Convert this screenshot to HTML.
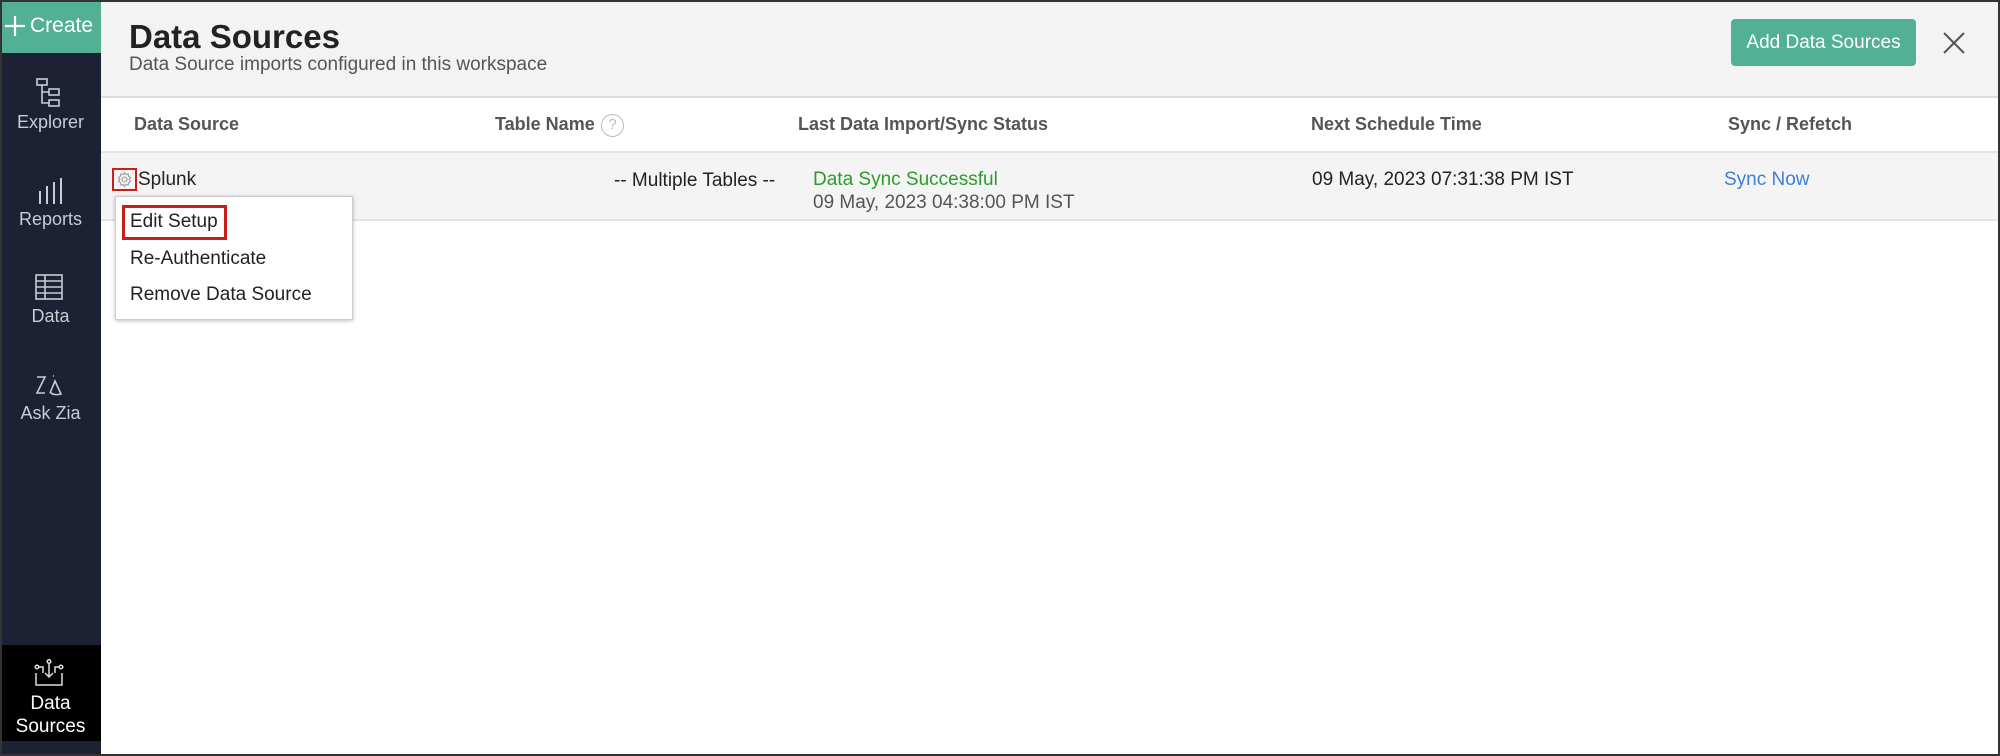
<!DOCTYPE html>
<html><head><meta charset="utf-8"><style>
*{margin:0;padding:0;box-sizing:border-box}
body{width:2000px;height:756px;position:relative;overflow:hidden;font-family:"Liberation Sans",sans-serif;background:#fff;color:#222}
.a{position:absolute;white-space:nowrap}
#frame{position:absolute;left:0;top:0;width:2000px;height:756px;border:2px solid #333;pointer-events:none;z-index:10}
.side{left:0;top:0;width:101px;height:756px;background:#1c2133}
.sl{color:#c9ccd4;font-size:18px;width:101px;text-align:center}
.th{font-size:18px;font-weight:bold;color:#555;top:114px}
.td{font-size:19px;color:#222}
</style></head><body>
<div class="a side"></div>
<div class="a" style="left:0;top:0;width:101px;height:53px;background:#52b095"></div>
<svg class="a" style="left:5px;top:16px" width="20" height="20" viewBox="0 0 20 20" stroke="#fff" stroke-width="2.2"><path d="M10 0v20M0 10h20"/></svg>
<div class="a" style="left:30px;top:14px;color:#fff;font-size:21px;">Create</div>
<svg class="a" style="left:35px;top:77px" width="28" height="32" viewBox="0 0 28 32" fill="none" stroke="#c9ccd4" stroke-width="1.6"><rect x="2" y="2" width="10" height="6"/><rect x="14" y="12" width="10" height="6"/><rect x="14" y="23" width="10" height="6"/><path d="M7 8v18h7M7 15h7"/></svg>
<div class="a sl" style="top:112px">Explorer</div>
<svg class="a" style="left:37px;top:177px" width="26" height="28" viewBox="0 0 26 28" stroke="#c9ccd4" stroke-width="2"><path d="M3 27V14M10 27V9M17 27V5M24 27V1"/></svg>
<div class="a sl" style="top:209px">Reports</div>
<svg class="a" style="left:35px;top:274px" width="28" height="26" viewBox="0 0 28 26" fill="none" stroke="#c9ccd4" stroke-width="1.6"><rect x="1" y="1" width="26" height="24"/><path d="M1 7h26M1 13h26M1 19h26M10 1v24"/></svg>
<div class="a sl" style="top:306px">Data</div>
<svg class="a" style="left:35px;top:374px" width="28" height="22" viewBox="0 0 28 22" fill="none" stroke="#c9ccd4" stroke-width="1.6"><path d="M2 3h8L2 19h8M15 19l5-12 6 13c-3 1-9 1-11-2M18 2h1"/></svg>
<div class="a sl" style="top:403px">Ask Zia</div>
<div class="a" style="left:0;top:645px;width:101px;height:96px;background:#000"></div>
<svg class="a" style="left:34px;top:659px" width="30" height="27" viewBox="0 0 30 27" fill="none" stroke="#ddd" stroke-width="1.5"><circle cx="15" cy="2.5" r="1.8"/><circle cx="3" cy="8" r="1.8"/><circle cx="27" cy="8" r="1.8"/><path d="M15 4v14M11 14l4 4 4-4M5 8h4v6M25 8h-4v6M2 14v12h26V14"/></svg>
<div class="a sl" style="top:693px;color:#fff;font-size:19px">Data</div>
<div class="a sl" style="top:716px;color:#fff;font-size:19px">Sources</div>

<div class="a" style="left:101px;top:0;width:1899px;height:98px;background:#f3f3f3;border-bottom:2px solid #ddd"></div>
<div class="a" style="left:129px;top:18px;font-size:33px;font-weight:bold;color:#222">Data Sources</div>
<div class="a" style="left:129px;top:54px;font-size:19px;color:#555">Data Source imports configured in this workspace</div>
<div class="a" style="left:1731px;top:19px;width:185px;height:47px;background:#52b095;border-radius:4px;color:#fff;font-size:19px;text-align:center;line-height:47px">Add Data Sources</div>
<svg class="a" style="left:1943px;top:32px" width="22" height="22" viewBox="0 0 22 22" stroke="#555" stroke-width="2"><path d="M1 1l20 20M21 1L1 21"/></svg>

<div class="a" style="left:101px;top:151px;width:1899px;height:2px;background:#e4e4e4"></div>
<div class="a th" style="left:134px">Data Source</div>
<div class="a th" style="left:495px">Table Name</div>
<div class="a" style="left:601px;top:114px;width:23px;height:23px;border:1.5px solid #bbb;border-radius:50%;color:#bbb;font-size:15px;text-align:center;line-height:20px">?</div>
<div class="a th" style="left:798px">Last Data Import/Sync Status</div>
<div class="a th" style="left:1311px">Next Schedule Time</div>
<div class="a th" style="left:1728px">Sync / Refetch</div>

<div class="a" style="left:101px;top:153px;width:1899px;height:68px;background:#f4f4f4;border-bottom:2px solid #e4e4e4"></div>
<div class="a" style="left:112px;top:168px;width:25px;height:23px;border:2px solid #c81e1e"></div>
<svg class="a" style="left:116px;top:171px" width="17" height="17" viewBox="0 0 17 17" fill="none" stroke="#999" stroke-width="1.1"><circle cx="8.5" cy="8.5" r="2.5"/><path d="M8.5 1.5l1.3 2 2.3-.6.4 2.3 2 1.3-1.2 2 1.2 2-2 1.3-.4 2.3-2.3-.6-1.3 2-1.3-2-2.3.6-.4-2.3-2-1.3 1.2-2-1.2-2 2-1.3.4-2.3 2.3.6z"/></svg>
<div class="a td" style="left:138px;top:169px">Splunk</div>
<div class="a td" style="left:614px;top:170px">-- Multiple Tables --</div>
<div class="a td" style="left:813px;top:169px;color:#2e9a2e">Data Sync Successful</div>
<div class="a td" style="left:813px;top:192px;color:#555">09 May, 2023 04:38:00 PM IST</div>
<div class="a td" style="left:1312px;top:169px">09 May, 2023 07:31:38 PM IST</div>
<div class="a td" style="left:1724px;top:169px;color:#3d7fd9">Sync Now</div>

<div class="a" style="left:115px;top:196px;width:238px;height:124px;background:#fff;border:1px solid #ccc;box-shadow:0 1px 4px rgba(0,0,0,.25)"></div>
<div class="a" style="left:122px;top:205px;width:105px;height:35px;border:3px solid #c81e1e"></div>
<div class="a td" style="left:130px;top:211px">Edit Setup</div>
<div class="a td" style="left:130px;top:248px">Re-Authenticate</div>
<div class="a td" style="left:130px;top:284px">Remove Data Source</div>
<div id="frame"></div>
</body></html>
